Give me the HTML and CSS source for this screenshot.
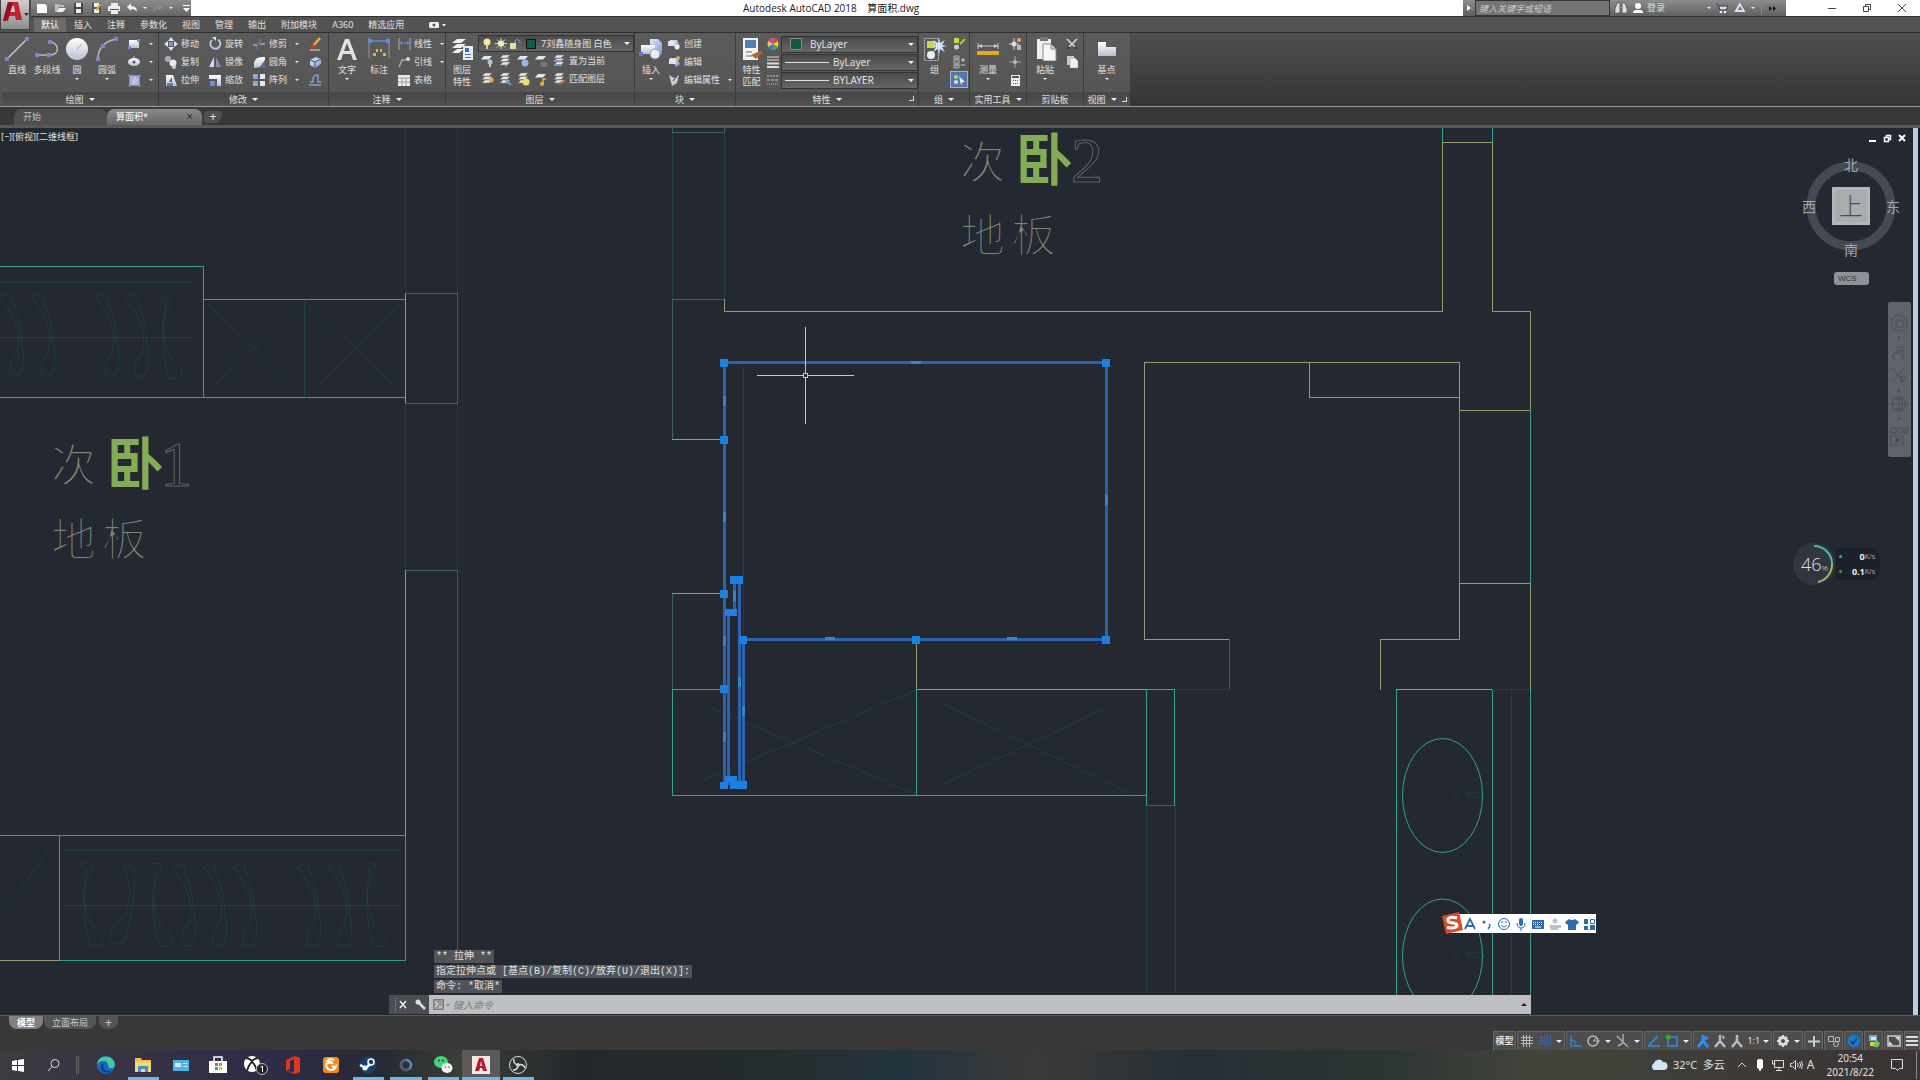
FILE: index.html
```html
<!DOCTYPE html>
<html lang="zh-CN">
<head>
<meta charset="utf-8">
<title>Autodesk AutoCAD 2018 - 算面积.dwg</title>
<link rel="stylesheet" href="styles.css">
</head>
<body>
<svg class="defs" aria-hidden="true">
<defs>
<linearGradient id="gw" x1="0" y1="0" x2="0" y2="1"><stop offset="0" stop-color="#fff"/><stop offset="1" stop-color="#b9bfd0"/></linearGradient>
<linearGradient id="gb" x1="0" y1="0" x2="1" y2="1"><stop offset="0" stop-color="#dfe8ff"/><stop offset="1" stop-color="#7f9bd6"/></linearGradient>
<symbol id="layers" viewBox="0 0 14 14"><path d="M5 1h7l-3 3H2zM5 4.500h7l-3 3H2zM5 8h7l-3 3H2z" fill="#e6e6e6" stroke="#777" stroke-width=".5"/></symbol>
<symbol id="leaf" viewBox="0 0 14 14"><path d="M4 2h8l-3 3.500H1z" fill="#e6e6e6"/></symbol>
<symbol id="cut-corner" viewBox="0 0 14 14"><path d="M3 3h7l3 6-4 3-2-4H2z" fill="url(#gb)"/></symbol>
</defs>
</svg>
<header class="titlebar">
  <button class="app" aria-label="应用程序菜单"><svg width="28" height="28" viewBox="0 0 28 28"><path d="M7 1h10l4 18h-6l-1-4H8l-1 5H2z" fill="#c8202f"/><path d="M11 5h2l1 6H9z" fill="#d7d7d7"/><path d="M7 1l-5 19 5-1L12 2z" fill="#8e1420"/><path d="M23 12h5l-2.500 3z" fill="#333"/></svg></button>
  <div class="top">
    <div class="quick">
      <button aria-label="新建"><svg width="14" height="14"><path d="M2 3h8l2 2v7H2z" fill="#fff"/></svg></button>
      <button aria-label="打开"><svg width="14" height="14"><path d="M2 3h4l1 1h4v2H6l-3 5H2z" fill="#bbb"/><path d="M6 7h7l-3 4H3z" fill="#eee"/></svg></button>
      <button aria-label="保存"><svg width="14" height="14"><path d="M3 2h9v11H3z" fill="#444"/><path d="M5 2h5v4H5zM5 8h5v4H5z" fill="#eee"/></svg></button>
      <button aria-label="另存为"><svg width="14" height="14"><path d="M3 2h9v11H3z" fill="#555"/><path d="M5 2h5v4H5zM5 8h5v4H5z" fill="#eee"/><path d="M12 3l-5 6" stroke="#e59b2e" stroke-width="2"/></svg></button>
      <button aria-label="打印"><svg width="14" height="14"><path d="M4 2h7v3H4zM1 5h12v5H1zM4 9h7v4H4z" fill="#eee"/><path d="M3 8h9v1H3z" fill="#555"/></svg></button>
      <button aria-label="放弃"><svg width="14" height="14"><path d="M2 6l4-4v3c5 0 6 3 6 6-1-2-3-3-6-3v2z" fill="#f2f2f2"/></svg></button>
      <i class="arr"></i>
      <button aria-label="重做"><svg width="14" height="14"><path d="M12 6L8 2v3c-5 0-6 3-6 6 1-2 3-3 6-3v2z" fill="#8a8a8a"/></svg></button>
      <i class="arr"></i>
      <button aria-label="自定义"><svg width="10" height="14"><path d="M2 4h7v1H2zM2 7h7L5.500 11z" fill="#fff"/></svg></button>
    </div>
    <h1>Autodesk AutoCAD 2018 &nbsp;&nbsp; 算面积.dwg</h1>
    <div class="info">
      <i class="tri-r"></i>
      <input type="text" placeholder="键入关键字或短语" aria-label="搜索">
      <button aria-label="查找"><svg width="14" height="14"><path d="M3 2h3v10H1V8zM8 2h3l2 6v4H8zM6 5h2v3H6z" fill="#ddd" stroke="#444" stroke-width=".6"/></svg></button>
      <button class="login"><svg width="12" height="14"><circle cx="6" cy="5" r="3" fill="#fff"/><path d="M1 12c0-3 2-3 5-3s5 0 5 3z" fill="#fff"/></svg>登录</button>
      <i class="arr"></i>
      <button aria-label="商店"><svg width="14" height="14"><path d="M1 3h2l2 6h6l2-4H4" fill="#ddd" stroke="#335" stroke-width="1"/><circle cx="6" cy="11" r="1.300" fill="#eee"/><circle cx="10" cy="11" r="1.300" fill="#eee"/></svg></button>
      <button aria-label="Autodesk 应用"><svg width="14" height="14"><path d="M7 3l4 7H3z" fill="none" stroke="#dfe3f5" stroke-width="2"/><path d="M7 1l6 10" stroke="#556" stroke-width=".6"/></svg></button>
      <i class="arr"></i><i class="sep"></i>
      <svg class="more" width="10" height="14"><path d="M1 5l3 2.500L1 10zM5 5l3 2.500L5 10z" fill="#111"/></svg>
    </div>
    <div class="win">
      <button aria-label="最小化"><svg width="10" height="10"><path d="M1 5.500h8" stroke="#444"/></svg></button>
      <button aria-label="还原"><svg width="10" height="10"><path d="M1.500 3.500h5v5h-5zM3.500 3V1.500h5v5H7" fill="none" stroke="#444"/></svg></button>
      <button aria-label="关闭"><svg width="10" height="10"><path d="M1 1l8 8M9 1l-8 8" stroke="#444"/></svg></button>
    </div>
  </div>
  <nav class="tabs">
    <button class="on">默认</button><button>插入</button><button>注释</button><button>参数化</button><button>视图</button><button>管理</button><button>输出</button><button>附加模块</button><button>A360</button><button>精选应用</button>
    <svg class="play" width="20" height="12"><rect x="1" y="3" width="10" height="6" rx="1.500" fill="#eee"/><circle cx="6" cy="6" r="1.500" fill="#555"/><path d="M14 5h4l-2 2.500z" fill="#eee"/></svg>
  </nav>
</header>

<section class="ribbon">
  <div class="panel p-draw">
    <div class="body">
      <button class="big"><svg width="24" height="24"><path d="M2 22L22 2" stroke="#ccc" stroke-width="1.500"/><path d="M0 20h4v4H0zM20 0h4v4h-4z" fill="#7c86d8"/></svg>直线</button>
      <button class="big"><svg width="24" height="24"><path d="M2 18h14c9-1 8-12-1-13" fill="none" stroke="#bbb" stroke-width="1.500"/><path d="M0 16h4v4H0zM12 16h4v4h-4zM13 3h4v4h-4z" fill="#7c86d8"/></svg>多段线</button>
      <button class="big"><svg width="24" height="24"><circle cx="12" cy="12" r="11" fill="url(#gw)"/><path d="M12 12l5-5" stroke="#9aa0cc"/></svg>圆<i class="arr"></i></button>
      <button class="big"><svg width="24" height="24"><path d="M3 22C3 10 10 4 22 2" fill="none" stroke="#bbb" stroke-width="1.500"/><path d="M1 20h4v4H1zM6 7h4v4H6zM19 0h4v4h-4z" fill="#7c86d8"/></svg>圆弧<i class="arr"></i></button>
      <div class="col">
        <button class="sm" aria-label="矩形"><svg width="14" height="14"><rect x="2" y="3" width="10" height="8" fill="url(#gw)"/><path d="M1 9h3v3H1zM10 2h3v3h-3z" fill="#7c86d8"/></svg><i class="arr"></i></button>
        <button class="sm" aria-label="椭圆"><svg width="14" height="14"><ellipse cx="7" cy="7" rx="6" ry="4" fill="url(#gw)"/><circle cx="7" cy="7" r="1.500" fill="#557"/><path d="M6 1h2v2H6z" fill="#7c86d8"/></svg><i class="arr"></i></button>
        <button class="sm" aria-label="图案填充"><svg width="14" height="14"><rect x="3" y="3" width="9" height="9" fill="#a9b2dc"/><path d="M5 9l4-4M6 11l5-5" stroke="#dde"/><path d="M2.500 1v13M12.500 1v13M1 2.500h13M1 12.500h13" stroke="#7c86d8"/></svg><i class="arr"></i></button>
      </div>
    </div>
    <h2>绘图 <i class="tri"></i></h2>
  </div>
  <div class="panel p-modify">
    <div class="body grid4">
      <button class="sm"><svg width="14" height="14"><path d="M7 0l3 4H4zM7 14l3-4H4zM0 7l4-3v6zM14 7l-4-3v6z" fill="#dfe3f2"/><path d="M5 5h4v4H5z" fill="#7f8fd0"/></svg>移动</button>
      <button class="sm"><svg width="14" height="14"><path d="M4 3a5 5 0 1 0 6-.5" fill="none" stroke="#b9c4ea" stroke-width="2"/><path d="M4 0h4v4z" fill="#dfe3f2"/></svg>旋转</button>
      <button class="sm"><svg width="14" height="14"><path d="M1 8h4M8 7h5" stroke="#aab" stroke-width="1.500"/><path d="M4 12l5-10" stroke="#7c86b8"/></svg>修剪<i class="arr"></i></button>
      <button class="sm" aria-label="删除"><svg width="14" height="14"><path d="M12 1L5 9" stroke="#e8b04a" stroke-width="2.500"/><path d="M6 8l-3 4" stroke="#d33" stroke-width="3"/><path d="M2 13h10" stroke="#ddd"/></svg></button>
      <button class="sm"><svg width="14" height="14"><circle cx="4" cy="4" r="3" fill="#aab"/><circle cx="9" cy="8" r="3.500" fill="#e9e9f2"/><circle cx="10" cy="12" r="2" fill="#ccd"/></svg>复制</button>
      <button class="sm"><svg width="14" height="14"><path d="M6 2v10H1z" fill="#d8dae8"/><path d="M8 2v10h5z" fill="#8a93ad"/></svg>镜像</button>
      <button class="sm"><svg width="14" height="14"><path d="M2 13V8q1-6 8-6h3v3L8 12z" fill="url(#gw)"/><path d="M7 13h6V7z" fill="#5870a8"/></svg>圆角<i class="arr"></i></button>
      <button class="sm" aria-label="分解"><svg width="14" height="14"><path d="M2 5l6-3 5 2v5l-6 4-5-3z" fill="url(#gb)"/><path d="M2 5l5 2 6-3M7 7v6" stroke="#456" fill="none"/></svg></button>
      <button class="sm"><svg width="14" height="14"><path d="M2 2h7l4 11H2z" fill="url(#gw)"/><path d="M3 10h6v3H3z" fill="#4f79c9"/><path d="M8 4v5H5z" fill="#557"/></svg>拉伸</button>
      <button class="sm"><svg width="14" height="14"><path d="M1 2h12v11H9V6H1z" fill="url(#gw)"/><path d="M2 8h5v5H2z" fill="#6c8fd6"/></svg>缩放</button>
      <button class="sm"><svg width="14" height="14"><path d="M1 1h5v5H1zM1 8h5v5H1z" fill="#8fa6dd"/><path d="M8 1h5v5H8zM8 8h5v5H8z" fill="#e4e8f5"/></svg>阵列<i class="arr"></i></button>
      <button class="sm" aria-label="偏移"><svg width="14" height="14"><path d="M1 12h12M2 9h3V6q0-4 5-4v7h3" fill="none" stroke="#8a9cd0" stroke-width="1.500"/></svg></button>
    </div>
    <h2>修改 <i class="tri"></i></h2>
  </div>
  <div class="panel p-note">
    <div class="body">
      <button class="big"><svg width="24" height="24"><path d="M2 23L10 2h4l8 21h-4l-2-6H8l-2 6zM9 14h6l-3-8z" fill="#e2e2e2"/></svg>文字<i class="arr"></i></button>
      <button class="big"><svg width="24" height="24"><path d="M2 1v20M22 1v20" stroke="#999"/><path d="M2 4h20" stroke="#5d8be0" stroke-width="1.500"/><path d="M1 2h4v4H1zM19 2h4v4h-4z" fill="#5d8be0"/><path d="M6 16h3v3H6zM9 12h2v3H9zM13 12h2v3h-2zM16 16h3v3h-3z" fill="#e9b52c"/></svg>标注</button>
      <div class="col">
        <button class="sm"><svg width="14" height="14"><path d="M2 1v12M13 1v12" stroke="#aaa"/><path d="M2 6h11" stroke="#5d8be0"/><path d="M2 6l3-2v4zM13 6l-3-2v4z" fill="#5d8be0"/></svg>线性<i class="arr"></i></button>
        <button class="sm"><svg width="14" height="14"><path d="M2 12L5 5h4" fill="none" stroke="#aaa" stroke-width="1.500"/><circle cx="11" cy="4" r="2" fill="#ddd"/></svg>引线<i class="arr"></i></button>
        <button class="sm"><svg width="14" height="14"><path d="M1 2h12v11H1z" fill="#eee"/><path d="M1 5h12M1 9h12M5 5v8M9 5v8" stroke="#999"/></svg>表格</button>
      </div>
    </div>
    <h2>注释 <i class="tri"></i></h2>
  </div>
  <div class="panel p-layer">
    <div class="body">
      <button class="big"><svg width="24" height="24"><path d="M7 2h9l-5 4H2zM7 7h9l-5 4H2zM7 12h7l-5 4H2z" fill="#f0f0f0"/><path d="M13 9h10v14H13z" fill="#e8ecf4"/><path d="M15 11h4v4h-4zM15 17h6v1h-6zM15 20h6v1h-6z" fill="#3f6fb5"/></svg>图层<br>特性</button>
      <div class="lay">
        <button class="combo"><svg width="58" height="16"><circle cx="8" cy="6" r="3.500" fill="#f3eb9a"/><path d="M7 9h2v4H7z" fill="#ccc"/><path d="M22 2v11M16 7.500h12M18 3.500l8 8M26 3.500l-8 8" stroke="#ddd"/><circle cx="22" cy="7.500" r="3" fill="#f5f0b8"/><path d="M31 7h6v6h-6z" fill="#e8e0a0"/><path d="M36 7V5q2-3 5 0v2" stroke="#999" fill="none"/><path d="M47.500 3.500h9v9h-9z" fill="#0c5c49" stroke="#111"/></svg><span>7刘鑫随身图 白色</span><i class="tri"></i></button>
        <div class="lrow">
          <svg width="14" height="14"><use href="#leaf"/><circle cx="10" cy="8" r="2.500" fill="#a9c8ee"/><path d="M9 10h2v3H9z" fill="#ccc"/></svg>
          <svg width="14" height="14"><use href="#layers"/><path d="M7 13l5-5" stroke="#9ab"/></svg>
          <svg width="14" height="14"><use href="#leaf"/><circle cx="9" cy="9" r="3.500" fill="#8fb6e4"/></svg>
          <svg width="14" height="14"><use href="#leaf"/><path d="M7 8h6v5H7z" fill="#777"/></svg>
          <button class="sm"><svg width="14" height="14"><use href="#layers"/><path d="M2 6h8v2H2zM2 10h8v2H2z" fill="#7d96c8"/></svg>置为当前</button>
        </div>
        <div class="lrow">
          <svg width="14" height="14"><use href="#layers"/><circle cx="11" cy="8" r="2.500" fill="#f0b040"/></svg>
          <svg width="14" height="14"><use href="#layers"/><path d="M8 8l5 5" stroke="#6f98d8" stroke-width="2"/></svg>
          <svg width="14" height="14"><use href="#layers"/><circle cx="10" cy="10" r="3.500" fill="#eedb6a"/></svg>
          <svg width="14" height="14"><use href="#leaf"/><path d="M9 13V7h3" stroke="#e9b52c" stroke-width="1.500" fill="none"/><circle cx="8" cy="12" r="2" fill="#e9b52c"/></svg>
          <button class="sm"><svg width="14" height="14"><use href="#layers"/><path d="M7 12l6-3" stroke="#c86a28" stroke-width="2.500"/></svg>匹配图层</button>
        </div>
      </div>
    </div>
    <h2>图层 <i class="tri"></i></h2>
  </div>
  <div class="panel p-block">
    <div class="body">
      <button class="big"><svg width="24" height="24"><path d="M11 2h8l4 4v11H11z" fill="url(#gb)"/><path d="M2 8h14v9H2z" fill="url(#gw)"/><circle cx="16" cy="17" r="5" fill="#e9ecf5" stroke="#8a93ad"/><path d="M0 15h4v4H0z" fill="#5d79d0"/></svg>插入<i class="arr"></i></button>
      <div class="col">
        <button class="sm"><svg width="14" height="14"><use href="#cut-corner"/><path d="M1 4h7v5H1z" fill="#dfe3ee"/><circle cx="10" cy="10" r="2.500" fill="#eee"/></svg>创建</button>
        <button class="sm"><svg width="14" height="14"><use href="#cut-corner"/><path d="M2 4h7v5H2z" fill="#dfe3ee"/><circle cx="11" cy="3" r="2" fill="#f0a83c"/></svg>编辑</button>
        <button class="sm"><svg width="14" height="14"><path d="M2 2l5 3 5-3-2 8-5 3z" fill="#c8cbd4"/><path d="M6 8l4-5" stroke="#444"/></svg>编辑属性<i class="arr"></i></button>
      </div>
    </div>
    <h2>块 <i class="tri"></i></h2>
  </div>
  <div class="panel p-prop">
    <div class="body">
      <button class="big"><svg width="24" height="24"><path d="M3 1h15v22H3z" fill="#f3f3f3"/><path d="M5 3h11v8H5z" fill="#4d7fb5"/><path d="M6 15h6M6 19h6" stroke="#666"/><path d="M11 18l5 4 7-7-3-1z" fill="#b5622a"/></svg>特性<br>匹配</button>
      <div class="rows">
        <svg width="12" height="14"><circle cx="6" cy="7" r="5.500" fill="#e8d23c"/><path d="M6 7L1 4a6 6 0 0 1 5-3z" fill="#d84a9a"/><path d="M6 7V1.500a6 6 0 0 1 5 3z" fill="#e04a30"/><path d="M6 7l5 3a6 6 0 0 1-5 2.500z" fill="#3cb04a"/><path d="M6 7v5.500A6 6 0 0 1 1 10z" fill="#3a78d8"/></svg>
        <button class="combo"><b class="sw"></b><span>ByLayer</span><i class="tri"></i></button>
        <svg width="12" height="14"><path d="M0 2h12" stroke="#ddd"/><path d="M0 5h12" stroke="#ddd"/><path d="M0 8.500h12M0 12h12" stroke="#ddd" stroke-width="2"/></svg>
        <button class="combo"><b class="ln"></b><span>ByLayer</span><i class="tri"></i></button>
        <svg width="12" height="14"><path d="M0 3h12" stroke="#ccc" stroke-dasharray="2 1"/><path d="M0 7h12" stroke="#ccc" stroke-dasharray="3 1"/><path d="M0 11h12" stroke="#ccc" stroke-dasharray="1 1"/></svg>
        <button class="combo"><b class="ln"></b><span>BYLAYER</span><i class="tri"></i></button>
      </div>
    </div>
    <h2>特性 <i class="tri"></i><i class="launch"></i></h2>
  </div>
  <div class="panel p-group">
    <div class="body">
      <button class="big"><svg width="24" height="24"><path d="M1.500 1.500h14v22h-14z" fill="none" stroke="#bbb" stroke-dasharray="2 1"/><path d="M4 4h8v7H4z" fill="#c5d94a"/><circle cx="8" cy="18" r="4" fill="#eee"/><path d="M16 0l1 6 5-3-3 5 5 1-5 1 3 5-5-3-1 6-1-6-5 3 3-5-4-1 4-1-3-5 5 3z" fill="#cfe6ff"/></svg>组</button>
      <div class="col">
        <svg width="14" height="14"><path d="M2 1h5v5H2z" fill="#c5d94a"/><circle cx="4.500" cy="10" r="2.500" fill="#ccc"/><path d="M8 7l5-5" stroke="#9bcf4a" stroke-width="2"/></svg>
        <svg width="14" height="14"><path d="M2 1h5v12H2z" fill="#777" stroke="#aaa"/><path d="M3 3h3v2H3zM3 8h3v3H3z" fill="#8fa0e0"/><path d="M9 5h4M11 3v4M9 10h4" stroke="#ccc"/></svg>
        <button class="hot" aria-label="组选择"><svg width="14" height="14"><circle cx="4" cy="4" r="2" fill="#c5d94a"/><circle cx="4" cy="9" r="2" fill="#ddd"/><path d="M7 3l6 6-3 .5-1 3z" fill="#eaf0c0"/></svg></button>
      </div>
    </div>
    <h2>组 <i class="tri"></i></h2>
  </div>
  <div class="panel p-util">
    <div class="body">
      <button class="big"><svg width="24" height="24"><path d="M2 6v6M22 6v6M2 9h20" stroke="#ccc"/><path d="M2 9l4-2v4zM22 9l-4-2v4z" fill="#ccc"/><path d="M1 14h22v4H1z" fill="#e3aa1c"/></svg>测量<i class="arr"></i></button>
      <div class="col">
        <svg width="14" height="14"><path d="M6 1v12M1 7h10" stroke="#ccc"/><circle cx="6" cy="7" r="2.500" fill="#ddd"/><circle cx="11" cy="3" r="2" fill="#f0a83c"/><path d="M9 8h4v5H9z" fill="#bbb"/></svg>
        <svg width="14" height="14"><path d="M7 1v12M1 7h12" stroke="#aaa"/><circle cx="7" cy="7" r="2" fill="#bbb"/></svg>
        <svg width="14" height="14"><path d="M3 2h9v11H3z" fill="#eee"/><path d="M4 3h7v2H4zM5 7h1v1H5zM7 7h1v1H7zM9 7h1v1H9zM5 10h1v1H5zM7 10h1v1H7zM9 10h1v1H9z" fill="#555"/></svg>
      </div>
    </div>
    <h2>实用工具 <i class="tri"></i></h2>
  </div>
  <div class="panel p-clip">
    <div class="body">
      <button class="big"><svg width="24" height="24"><path d="M4 2h14v20H4z" fill="#eee"/><path d="M7 0h8v4H7z" fill="#777"/><path d="M10 7h8l5 5v12H10z" fill="#f7f7f7" stroke="#888"/><path d="M18 7v5h5" fill="#ccc" stroke="#888"/></svg>粘贴<i class="arr"></i></button>
      <div class="col">
        <svg width="14" height="14"><path d="M2 2l8 8M12 2L4 10" stroke="#ddd" stroke-width="1.500"/><path d="M2 11h3M9 11h3" stroke="#333" stroke-width="2"/></svg>
        <svg width="14" height="14"><path d="M2 1h7v9H2z" fill="#ccc"/><path d="M5 3h5l3 3v7H5z" fill="#f3f3f3" stroke="#888" stroke-width=".5"/></svg>
      </div>
    </div>
    <h2>剪贴板</h2>
  </div>
  <div class="panel p-view">
    <div class="body"><button class="big"><svg width="24" height="24"><path d="M3 5h8v5h10v9H3z" fill="url(#gw)"/></svg>基点<i class="arr"></i></button></div>
    <h2>视图 <i class="tri"></i><i class="launch"></i></h2>
  </div>
</section>

<nav class="files">
  <button class="file">开始</button>
  <button class="file on">算面积*<span>×</span></button>
  <button class="plus" aria-label="新图形">+</button>
</nav>

<main class="canvas">
  <svg class="drawing" viewBox="0 128 1913 887" preserveAspectRatio="xMinYMin slice">
    <g class="dim">
      <path d="M405.500 128V293M405.500 403V570M457.500 128V293M457.500 403V570M672.500 132V299M724.500 132V299M743.500 366V636M0 282.500H192M0 337.500H192M304.500 299V397M64 850.500H400M64 905.500H400M1146.500 805V992M1175.500 805V992M1175 689.500H1229.500M1492 689.500H1530M1511.500 690V995"/>
      <path d="M208 304l83 80M216 384l85-80M310 304l82 80M320 384l81-80M0 911Q30 880 48 850M705 705l210 89M697 783l219-93M940 702l195 94M940 786l170-80"/>
      <path id="h1" d="M32 298c2-6 14-6 11 2 8 18 9 30 10 45 4 15 0 25-3 31h-7c-5-6-1-15 5-24 4-15 2-30-16-54"/>
      <use href="#h1" x="-31"/><use href="#h1" x="64"/><use href="#h1" x="94"/><use href="#h1" x="141" y="570"/><use href="#h1" x="172" y="570"/><use href="#h1" x="202" y="570"/><use href="#h1" x="266" y="570"/><use href="#h1" x="297" y="570"/>
      <path id="h2" d="M160 300c2-6 13-5 11 1-10 20-12 40 3 60 12 9 8 19 3 18h-7c-8-20-9-50-4-78"/>
      <use href="#h2" x="204" y="567"/><use href="#h2" x="-10" y="567"/><use href="#h2" x="-79" y="567"/>
      <path d="M124 868c2-5 10-4 10 2 2 25-4 54-10 73h-12c-5-6-1-17 13-28 8-15 5-30-1-47"/>
      <circle cx="1456" cy="795" r="3"/><circle cx="1456" cy="955" r="3"/><path d="M1468 793h15v4h-15zM1468 953h15v4h-15z"/>
    </g>
    <g class="mid"><path d="M457.500 293V403.500H405M405 293.500H457M457.500 570V958M672.500 299V439M672.500 299.500H724M672.500 128V132.500H724.500V128M672.500 593V689M1229.500 639V689M405 570.500H457M1175.500 805.500H1146"/></g>
    <g class="yel"><path d="M405.500 293V403M405.500 570V835M0 960.500H59M724.500 299V311.500H1442.500V142.500H1492.500V311.500H1530.500V410M672 439.500H724M672 593.500H724M916.500 639V689.500H1146M1229 639.500H1144.500V362.500H1459.500V410.500H1530M1309.500 362V397.500H1459M1459.500 583V639.500H1380.500V689.500M1459 583.500H1530.500V690M1396 689.500H1492"/></g>
    <g class="teal"><path d="M0 266.500H203.500V397M0 397.500H405M203 299.500H405M0 835.500H405.500V960.500H59.500V835M672 689.500H724M672.500 689V795.500H1146M916.500 689V795M1146.500 805V689.500H1174.500V805M1442.500 128V142M1492.500 128V142M1459.500 410V583M1530.500 410V583M1396.500 690V1013M1492.500 690V1008M1530.500 690V1015"/><ellipse cx="1442.500" cy="795.500" rx="40" ry="57"/><ellipse cx="1442.500" cy="956" rx="40" ry="57"/></g>
    <g class="sel"><path d="M724 362.500H1106V639H743V785M724 362V785M728 612V785M734 580V610M739 580V785"/></g>
    <g class="grip"><path d="M720 359h8v8h-8zM1102 359h8v8h-8zM720 436h8v8h-8zM720 590h8v8h-8zM720 685h8v8h-8zM739 636h8v8h-8zM912 636h8v8h-8zM1102 636h8v8h-8zM730 576h13v8h-13zM725 609h12v7h-12zM725 776h12v6h-12zM720 782h8v7h-8zM730 781h17v8h-17z"/></g>
    <g class="tick"><path d="M911 361h10v3h-10zM723 396h3v10h-3zM723 512h3v10h-3zM733 591h3v10h-3zM723 636h3v10h-3zM738 677h3v10h-3zM742 706h3v10h-3zM723 732h3v10h-3zM825 637h10v3h-10zM1007 637h10v3h-10zM1105 495h3v10h-3z"/></g>
    <g class="cross"><path d="M757 375.500H803M808 375.500H854M805.500 327V373M805.500 378V424M803.500 373.500h4v4h-4z"/></g>
    <g class="label"><text x="51" y="482">次</text><text x="51" y="556">地</text><text x="102" y="556">板</text><text x="960" y="179">次</text><text x="960" y="252">地</text><text x="1011" y="252">板</text></g>
    <g class="label-n"><text x="160" y="486">1</text><text x="1071" y="182">2</text></g>
    <g class="label-b"><text x="107" y="484">卧</text><text x="1016" y="180">卧</text></g>
  </svg>
  <p class="viewlabel">[−][俯视][二维线框]</p>
  <div class="docwin"><svg width="40" height="12"><path d="M1 8h7v2H1z" fill="#fff"/><path d="M16.500 5.500h4v4h-4zM18.500 5V3.500h4v4H21" fill="none" stroke="#fff" stroke-width="1.500"/><path d="M31 3l6 6M37 3l-6 6" stroke="#fff" stroke-width="2"/></svg></div>
  <div class="cube">
    <svg width="100" height="100"><circle cx="50" cy="50" r="40" fill="none" stroke="#454951" stroke-width="9"/><path d="M31 31h38v38H31z" fill="#b4b7bb"/><path d="M34 34h32v32H34z" fill="#a9adad"/></svg>
    <span class="n">北</span><span class="s">南</span><span class="w">西</span><span class="e">东</span><span class="c">上</span>
  </div>
  <button class="wcs">WCS</button>
  <div class="navbar"><svg width="23" height="155" fill="none" stroke="#4c4f54"><circle cx="11" cy="21" r="8"/><path d="M8 18h7v7H8zM6 58c-3-8 3-9 8-6M9 45h6M9 49h6M15 44v14M4 66l12 14M16 66L4 80"/><circle cx="15" cy="77" r="3"/><circle cx="11" cy="102" r="7"/><path d="M3 102h17M11 94v16M8 97h6v10H8M3 126h5v5H3zM10 126h5v5h-5zM17 126h3v5h-3zM3 134h12v9H3z"/><path d="M8 136l4 2-4 3zM10 35h3l-2 2zM10 88h3l-2 2zM10 116h3l-2 2z" fill="#44474c"/></svg></div>
  <div class="speed">
    <svg width="44" height="44"><circle cx="22" cy="22" r="21" fill="#303540"/><path d="M22 4a18 18 0 0 1 18 18" fill="none" stroke="#4fb8a8" stroke-width="2"/><path d="M40 22a18 18 0 0 1-14 18" fill="none" stroke="#a0c060" stroke-width="2"/></svg>
    <strong>46<small>%</small></strong>
    <div class="rate"><p><i class="up"></i><b>0</b>K/s</p><p><i class="dn"></i><b>0.1</b>K/s</p></div>
  </div>
  <div class="ime">
    <svg class="sogou" width="22" height="22"><path d="M1 4L18 0l4 18-17 4z" fill="#dc4a28"/><path d="M16 6c-6-2-10 0-9 3s9 1 9 4-6 4-10 2" fill="none" stroke="#fff" stroke-width="3"/></svg>
    <svg width="14" height="14"><path d="M2 12L7 2l5 10M4 9h6" fill="none" stroke="#2b6cb3" stroke-width="1.800"/></svg>
    <svg width="14" height="14"><circle cx="4" cy="5" r="1.500" fill="#2b6cb3"/><path d="M9 7q2 2-1 5" stroke="#2b6cb3" stroke-width="1.500" fill="none"/></svg>
    <svg width="14" height="14" fill="none" stroke="#2b6cb3"><circle cx="7" cy="7" r="5.500"/><path d="M4 8q3 4 6 0M5 4v2M9 4v2"/></svg>
    <svg width="14" height="14"><rect x="5" y="1" width="4" height="8" rx="2" fill="#2b6cb3"/><path d="M3 6q0 5 4 5t4-5M7 11v3" stroke="#2b6cb3" fill="none"/></svg>
    <svg width="14" height="14"><path d="M1 3h12v9H1z" fill="#2b6cb3"/><path d="M2 5.500h10M2 7.500h10" stroke="#fff" stroke-dasharray="1 1"/><path d="M4 10h6" stroke="#fff"/></svg>
    <svg width="14" height="14"><circle cx="7" cy="4" r="2.500" fill="#bcc2cc"/><path d="M1 8h9v5H3zM10 8h3v3h-3z" fill="#bcc2cc"/></svg>
    <svg width="14" height="14"><path d="M4 2q3 2 6 0l4 3-2 3-1-1v6H3V7L2 8 0 5z" fill="#2b6cb3"/></svg>
    <svg width="14" height="14"><path d="M2 2h4v5H2zM8 8h5v5H8zM2 9h4v4H2z" fill="#2b6cb3"/><path d="M8.500 2.500h4v4h-4z" fill="none" stroke="#2b6cb3"/></svg>
  </div>
  <div class="cmd">
    <p>** 拉伸 **</p><p>指定拉伸点或 [基点(B)/复制(C)/放弃(U)/退出(X)]:</p><p>命令: *取消*</p>
    <div class="cmdbar">
      <div class="grab"><svg width="40" height="19"><path d="M6.500 3v14" stroke="#888" stroke-dasharray="1 1"/><path d="M11 6l6 7M17 6l-6 7" stroke="#eee" stroke-width="1.500"/><path d="M28 6l8 8" stroke="#ddd" stroke-width="2.500"/><circle cx="29" cy="7" r="2.500" fill="#ddd"/></svg></div>
      <svg width="24" height="19"><path d="M4.500 4.500h10v10h-10z" fill="#999" stroke="#777"/><path d="M6 7l3 2-3 3M10 12h3" stroke="#eee" fill="none"/><path d="M17 9h4l-2 2z" fill="#777"/></svg>
      <input type="text" placeholder="键入命令" aria-label="命令">
      <i class="upmark"></i>
    </div>
  </div>
  <div class="edge"></div>
</main>

<footer class="status">
  <nav class="layouts"><button class="on">模型</button><button>立面布局</button><button class="add" aria-label="新建布局">+</button></nav>
  <div class="tools">
    <div class="g w23"><b>模型</b></div>
    <div class="g w48"><svg width="14" height="14"><path d="M3.500 1v12M6.500 1v12M9.500 1v12M1 3.500h12M1 6.500h12M1 9.500h12" stroke="#bbb"/></svg><svg width="14" height="14"><path d="M3.500 1v12M6.500 1v12M9.500 1v12M12.500 1v12M1 3.500h12M1 6.500h12M1 9.500h12" stroke="#2f62c8" stroke-dasharray="2 1"/></svg><i class="tri"></i></div>
    <div class="g w77"><svg width="14" height="14"><path d="M2 1v11h11M2 6q5 0 5 6" stroke="#2f7de0" stroke-width="1.500" fill="none"/></svg><svg width="14" height="14"><circle cx="6" cy="7" r="5" fill="none" stroke="#bbb" stroke-width="1.500"/><path d="M6 7h7M6 7l4-4" stroke="#bbb"/></svg><i class="tri"></i><svg width="14" height="14"><path d="M1 2l11 11M7 0v9M7 9l-5 3" stroke="#aaa" stroke-width="1.500"/></svg><i class="tri"></i></div>
    <div class="g w48"><svg width="14" height="14"><path d="M1 12h12M2 11l9-9" stroke="#2f8cf0" stroke-width="1.500"/></svg><svg width="14" height="14"><path d="M3 3h9v9H3z" fill="none" stroke="#2f8cf0" stroke-width="1.500"/><path d="M1 1h4v4H1z" fill="#18c018"/></svg><i class="tri"></i></div>
    <div class="g w79"><svg width="14" height="14"><path d="M7 1v7M7 7l-5 6M7 7l5 6" stroke="#2f8cf0" stroke-width="3"/><circle cx="10" cy="4" r="2" fill="#2f8cf0"/></svg><svg width="14" height="14"><path d="M7 1v7M7 7l-5 6M7 7l5 6" stroke="#bbb" stroke-width="2.500"/><path d="M9 1l3 3-2 1z" fill="#ddd"/></svg><svg width="14" height="14"><path d="M7 1v7M7 7l-5 6M7 7l5 6" stroke="#bbb" stroke-width="2.500"/></svg><span>1:1</span><i class="tri"></i></div>
    <div class="g w30"><svg width="14" height="14"><circle cx="7" cy="7" r="3.500" fill="none" stroke="#ddd" stroke-width="3"/><path d="M7 1v2M7 11v2M1 7h2M11 7h2M3 3l1 1M11 11l-1-1M11 3l-1 1M3 11l1-1" stroke="#ddd" stroke-width="2"/></svg><i class="tri"></i></div>
    <div class="g w19"><svg width="14" height="14"><path d="M7 2v11M1 7.500h12" stroke="#ccc" stroke-width="2"/></svg></div>
    <div class="g w19"><svg width="14" height="14" fill="none" stroke="#bbb"><path d="M1.500 2.500h5v5h-5zM8.500 3.500h4v4h-4z"/><circle cx="9" cy="10" r="2.500"/></svg></div>
    <div class="g w19"><svg width="14" height="14"><circle cx="7" cy="7" r="6.500" fill="#1878c8"/><path d="M4 7l2 3 4-6" stroke="#0b3f78" fill="none" stroke-width="1.500"/></svg></div>
    <div class="g w19"><svg width="14" height="14"><path d="M2 1h8v6H2z" fill="#5ab0e8"/><path d="M4 3h5v3H4z" fill="#e8e8e8"/><path d="M3 8h9v4H3z" fill="#e8c838"/><path d="M9 6l4 3-2 4H6z" fill="#7ac05a"/></svg></div>
    <div class="g w19"><svg width="14" height="14"><path d="M1 2h12v10H1z" fill="none" stroke="#ccc" stroke-width="1.500"/><path d="M8 3h4v4zM6 11H2V7z" fill="#ddd"/></svg></div>
    <div class="g w16"><svg width="12" height="14"><path d="M0 3h12M0 7h12M0 11h12" stroke="#ddd" stroke-width="2"/></svg></div>
  </div>
</footer>

<footer class="taskbar">
  <div class="start">
    <button aria-label="开始"><svg width="14" height="14"><path d="M1 3l5-1v5H1zM7 2l6-1v6H7zM1 8h5v5l-5-1zM7 8h6v6l-6-1z" fill="#fff"/></svg></button>
    <button aria-label="搜索"><svg width="14" height="14" fill="none" stroke="#ddd"><circle cx="8" cy="5.500" r="4"/><path d="M5 8.500L1 13"/></svg></button>
    <i class="bar"></i>
  </div>
  <div class="apps">
    <button aria-label="Edge"><svg width="20" height="20"><circle cx="10" cy="10" r="9" fill="#1769c4"/><path d="M1 10C1 3 8 0 13 2c6 2 8 10 3 11-5 1-3-4-5-6-3-2-9-1-10 3z" fill="#3fc9a4"/><path d="M7 12c1 4 5 5 9 3-3 4-10 3-11-1-1-3 1-6 4-6z" fill="#0b3f86"/></svg></button>
    <button class="run" aria-label="文件资源管理器"><svg width="20" height="20"><path d="M2 3h6l1 2h9v12H2z" fill="#f3c14e"/><path d="M2 7h16v10H2z" fill="#f8d676"/><path d="M5 11h10v6h-3v-3H8v3H5z" fill="#3f8fd0"/></svg></button>
    <button aria-label="邮件"><svg width="20" height="20"><path d="M2 5h16v11H2z" fill="#4fb2ea"/><path d="M4 8h6v4H4zM12 8h4v1h-4zM12 11h4v1h-4z" fill="#cfeaff"/></svg></button>
    <button aria-label="应用商店"><svg width="20" height="20"><path d="M1 6h18v12H1z" fill="#fff"/><path d="M6 6V2h8v4" fill="none" stroke="#fff" stroke-width="1.500"/><path d="M7 8h3v3H7z" fill="#f25022"/><path d="M11 8h3v3h-3z" fill="#7fba00"/><path d="M7 12h3v3H7z" fill="#00a4ef"/><path d="M11 12h3v3h-3z" fill="#ffb900"/></svg></button>
    <button aria-label="Xbox"><svg width="26" height="20"><circle cx="9" cy="9" r="8" fill="#fff"/><path d="M4 16Q6 9 9 7q3 2 5 9M3 3q3 0 6 3 3-3 6-3" stroke="#222" stroke-width="1.800" fill="none"/><circle cx="19" cy="14" r="5.500" fill="#222" stroke="#bbb"/><path d="M17.500 12.500l2-1.500v6" stroke="#fff" fill="none"/></svg></button>
    <button aria-label="Office"><svg width="20" height="20"><path d="M3 5l9-4 5 2v14l-5 2-9-3 8 1V4L7 6v8l-4 2z" fill="#d8381c"/></svg></button>
    <button aria-label="UC"><svg width="20" height="20"><rect x="2" y="2" width="16" height="16" rx="3" fill="#f58a1f"/><path d="M13 5q-5-2-7 1 4 0 5 2-5-1-6 2 1 5 5 5 5-1 5-4-2 2-4 0" stroke="#fff" stroke-width="1.800" fill="none"/></svg></button>
    <button class="run" aria-label="Steam"><svg width="20" height="20"><circle cx="10" cy="10" r="8.500" fill="#17406e"/><circle cx="13" cy="7" r="3" fill="none" stroke="#fff" stroke-width="1.500"/><path d="M2 10l6 3 4-4" stroke="#fff" stroke-width="2.500" fill="none"/><circle cx="7" cy="13" r="2.500" fill="#fff"/></svg></button>
    <button class="run" aria-label="加速器"><svg width="20" height="20"><circle cx="10" cy="10" r="5" fill="none" stroke="#555c66" stroke-width="3"/><path d="M10 5a5 5 0 0 1 3 9" stroke="#5aa0d8" fill="none" stroke-width="1.500"/></svg></button>
    <button class="run" aria-label="微信"><svg width="20" height="20"><ellipse cx="8" cy="7" rx="7" ry="6" fill="#45d673"/><ellipse cx="14" cy="13" rx="5.500" ry="5" fill="#f0f5ee"/><circle cx="6" cy="5.500" r="1" fill="#244"/><circle cx="10" cy="5.500" r="1" fill="#244"/><circle cx="12.500" cy="12" r=".8" fill="#555"/><circle cx="16" cy="12" r=".8" fill="#555"/></svg></button>
    <button class="run active" aria-label="AutoCAD"><svg width="18" height="18"><path d="M0 0h18v18H0z" fill="#fbe8e4"/><path d="M7 2h4l4 13h-4l-1-3H8l-1 3H3zM8 10h2l-1-5z" fill="#b01c2c"/></svg></button>
    <button class="run" aria-label="OBS"><svg width="20" height="20" fill="none" stroke="#ddd"><circle cx="10" cy="10" r="8.500"/><path d="M10 10q-5-1-4-6M10 10q5-2 7 3M10 10q0 5-5 5" stroke-width="1.500"/><circle cx="10" cy="10" r="1.500"/></svg></button>
  </div>
  <div class="tray">
    <svg width="18" height="16"><path d="M4 13a4 4 0 0 1 0-7 5 5 0 0 1 9-1 4 4 0 0 1 1 8z" fill="#cfe6fa"/></svg>
    <span class="wx">32°C&nbsp; 多云</span>
    <svg width="14" height="14"><path d="M3 9l4-4 4 4" stroke="#ddd" fill="none"/></svg>
    <svg width="14" height="14"><rect x="4" y="1" width="6" height="10" rx="2" fill="#fff"/><path d="M6 11h2v2H6z" fill="#ddd"/></svg>
    <svg width="14" height="14" fill="none" stroke="#ddd"><path d="M3.500 2.500h9v7h-9zM5 12.500h6M8 10v2M1.500 2v4h3"/></svg>
    <svg width="14" height="14" fill="none" stroke="#ddd"><path d="M1.500 5.500h2l3-3v9l-3-3h-2zM8.500 5q1.500 2 0 4M10.500 4q2.500 3 0 6M12.500 3q2 4 0 8"/></svg>
    <span class="lang">A</span>
    <time>20:54<br>2021/8/22</time>
    <svg width="14" height="14" fill="none" stroke="#ddd"><path d="M1.500 1.500h11v9h-3l-2 2-2-2h-4z"/></svg>
    <i class="desk"></i>
  </div>
</footer>
</body>
</html>
```
FILE: styles.css
```css
* { box-sizing: border-box; margin: 0; padding: 0; }
body {
  display: flex; flex-direction: column; height: 100vh; overflow: hidden;
  font: 9px/12px "Noto Sans", "Noto Sans CJK SC", sans-serif; color: #e0e0e0; background: #242830;
}
button, input { font: inherit; color: inherit; border: 0; background: none; }
button { display: flex; align-items: center; white-space: nowrap; }
svg { display: block; flex: none; }
.defs { position: absolute; width: 0; height: 0; }
.arr { width: 0; height: 0; border: 2px solid transparent; border-top-color: #eee; border-bottom: 0; flex: none; }
.tri { width: 0; height: 0; border: 3px solid transparent; border-top-color: #eee; border-bottom: 0; flex: none; }

.titlebar { display: grid; grid-template: 17px 15px / 31px 1fr; flex: none; background: #535353; border-bottom: 1px solid #2d2d2d; }
.app { grid-row: 1 / 3; width: 30px; height: 30px; background: linear-gradient(#cfcfcf, #8e8e8e); border: 1px solid #444; border-top: 0; }
.top { display: flex; background: #fff; border-bottom: 1px solid #333; }
.quick { display: flex; align-items: center; gap: 4px; width: 160px; padding-left: 4px; background: linear-gradient(#8c8c8c, #666); }
.quick button:last-child { margin-left: 4px; }
.top h1 { flex: 1; padding: 2px 0 0 552px; font: 10px/12px "Open Sans", "Noto Sans CJK SC", sans-serif; color: #222; white-space: nowrap; }
.info { display: flex; align-items: center; gap: 4px; width: 323px; background: linear-gradient(#8c8c8c, #606060); }
.tri-r { border: 3px solid transparent; border-left: 4px solid #fff; border-right: 0; margin: 0 0 0 4px; }
.info input { width: 135px; height: 16px; padding-left: 3px; background: #747474; border: 1px solid #333; font-style: italic; }
.info input::placeholder { color: #ccc; }
.login { gap: 3px; width: 71px; }
.sep { width: 1px; height: 13px; margin: 0 2px; background: #888; }
.win { display: flex; align-items: center; justify-content: space-between; width: 134px; padding: 0 13px 0 41px; }
.tabs { display: flex; align-items: center; gap: 1px; padding-left: 3px; }
.tabs button { height: 14px; padding: 0 7px; }
.tabs .on { background: #6c6c6c; color: #fff; }
.play { margin-left: 16px; }

.ribbon { display: flex; height: 74px; flex: none; background: linear-gradient(#4f4f4f, #353535); border-bottom: 1px solid #9a9a9a; }
.panel { display: flex; flex-direction: column; background: linear-gradient(#5b5b5b, #545454); border-right: 1px solid #3c3c3c; }
.body { display: flex; flex: 1; padding-top: 2px; }
.panel h2 { display: flex; align-items: center; justify-content: center; gap: 5px; height: 14px; font: 9px/13px "Noto Sans", "Noto Sans CJK SC", sans-serif; background: linear-gradient(#464646, #525252); white-space: nowrap; }
.launch { width: 5px; height: 5px; border: 1px solid #ddd; border-top: 0; border-left: 0; }
.p-prop h2 { position: relative; }
.p-prop .launch { position: absolute; right: 4px; top: 4px; }
.big { flex-direction: column; width: 31px; line-height: 12px; padding-top: 2px; text-align: center; }
.big svg { margin-bottom: 3px; }
.big .arr { margin-top: 2px; }
.col { display: flex; flex-direction: column; }
.sm { height: 18px; gap: 3px; }
.sm .arr { margin-left: 5px; }
.col > svg { margin: 2px; }
.p-draw { width: 159px; padding-left: 2px; }
.p-draw .big { width: 30px; }
.p-draw .col { padding-left: 5px; }
.p-modify { width: 170px; }
.grid4 { display: grid; grid-template-columns: 44px 44px 56px 14px; grid-template-rows: 18px 18px 18px; padding-left: 5px; }
.p-note { width: 117px; }
.p-note .big { width: 32px; margin-left: 2px; }
.p-note .big + .big { margin-left: 0; }
.p-note .col { padding-left: 2px; }
.p-layer { width: 189px; }
.p-layer .big { width: 32px; }
.lay { display: flex; flex-direction: column; width: 156px; }
.combo { height: 17px; gap: 4px; width: 100%; padding-right: 3px; background: linear-gradient(#4a4a4a, #666); border: 1px solid #333; }
.combo span { flex: 1; text-align: left; }
.lrow { display: flex; align-items: center; gap: 4px; height: 18px; padding-left: 2px; }
.p-block { width: 101px; }
.p-block .big { width: 32px; }
.p-prop { width: 183px; }
.rows { display: grid; grid-template: 18px 18px 18px / 14px 137px; align-items: center; }
.rows .combo { font-size: 10px; }
.sw { width: 12px; height: 12px; margin: 0 4px 0 8px; background: #0c5c49; border: 1px solid #888; }
.ln { width: 44px; height: 1px; margin-left: 3px; background: #ddd; }
.p-group { width: 51px; }
.hot { width: 18px; height: 17px; justify-content: center; background: #5577b0; border: 1px solid #9ab4e0; }
.p-util, .p-clip { width: 57px; }
.p-util .big, .p-clip .big { width: 36px; }
.p-view { width: 46px; border-right: 0; }
.p-view .big { width: 45px; }

.files { display: flex; align-items: flex-end; height: 21px; flex: none; padding-left: 14px; background: #383838; border-bottom: 3px solid #585858; }
.file { width: 93px; height: 16px; padding: 0 9px; border-radius: 7px 7px 0 0; background: #4f4f4f; color: #bbb; }
.file.on { width: 95px; background: linear-gradient(#8a8a8a, #666); color: #fff; justify-content: space-between; }
.file span { font-size: 12px; color: #333; }
.plus { width: 18px; height: 12px; margin: 0 0 2px 2px; justify-content: center; font-size: 12px; background: #505050; border-radius: 3px 3px 8px 3px; }

.canvas { position: relative; flex: 1; min-height: 0; overflow: hidden; background: #242830; }
.drawing { width: calc(100% - 7px); height: 100%; fill: none; shape-rendering: crispEdges; }
.drawing ellipse, .dim, .label, .label-b { shape-rendering: auto; }
.dim { stroke: #1b403d; }
.mid { stroke: #36645c; }
.yel { stroke: #959b6c; }
.teal { stroke: #30a48c; }
.sel { stroke: #2f62ae; stroke-width: 3px; }
.grip { fill: #1c80e0; }
.tick { fill: #2f86c8; }
.cross { stroke: #c4c8cc; }
.label { font-family: "Noto Sans CJK SC", sans-serif; font-size: 45px; fill: #7c8672; stroke: #242830; stroke-width: 2px; }
.label-n { font-family: "Liberation Serif", serif; font-size: 64px; fill: #242830; stroke: #5d655c; stroke-width: 1px; }
.label-b { font-family: "Noto Sans CJK SC", sans-serif; font-size: 56px; fill: #83ad55; stroke: #83ad55; stroke-width: 2px; }
.viewlabel { position: absolute; left: 1px; top: 3px; font-size: 9px; }
.docwin { position: absolute; right: 12px; top: 4px; }
.cube { position: absolute; right: 19px; top: 28px; width: 100px; height: 100px; color: #a4a8ac; font-size: 14px; line-height: 16px; }
.cube span { position: absolute; }
.cube .n { left: 43px; top: 1px; }
.cube .s { left: 43px; top: 86px; }
.cube .w { left: 1px; top: 43px; }
.cube .e { right: 1px; top: 43px; }
.cube .c { left: 38px; top: 38px; font-size: 24px; line-height: 24px; color: #4b5056; font-weight: 300; }
.wcs { position: absolute; right: 51px; top: 144px; width: 35px; height: 13px; padding-left: 4px; border-radius: 3px; background: #8d9198; color: #333; font: 8px/12px "Liberation Sans", sans-serif; }
.navbar { position: absolute; right: 9px; top: 174px; width: 23px; height: 155px; background: #5f6369; border-radius: 2px; }
.speed { position: absolute; right: 40px; top: 414px; display: flex; align-items: center; width: 88px; }
.speed strong { position: absolute; left: 9px; top: 10px; font: 18px/24px "Open Sans", sans-serif; font-weight: 300; white-space: nowrap; }
.speed small { font-size: 8px; }
.rate { flex: 1; height: 32px; padding: 1px 5px 0 3px; background: #1b202a; border-radius: 0 10px 10px 0; font-size: 7px; color: #aaa; }
.rate p { display: flex; align-items: center; height: 15px; }
.rate b { flex: 1; text-align: right; font-size: 9px; color: #eee; }
.rate i { width: 3px; height: 3px; border-radius: 2px; background: #2fb0b0; }
.rate .dn { background: #3fa040; }
.ime { position: absolute; right: 324px; top: 786px; display: flex; align-items: center; gap: 3px; width: 146px; height: 19px; padding-left: 13px; background: #fff; }
.sogou { position: absolute; left: -9px; top: -2px; }
.cmd { position: absolute; left: 389px; right: 389px; bottom: 1px; display: flex; flex-direction: column; align-items: flex-start; gap: 2px; }
.cmd p { height: 13px; margin-left: 45px; padding: 0 2px; font: 10px/14px "Liberation Mono", "Noto Sans CJK SC", monospace; background: #50545a; white-space: nowrap; }
.cmdbar { display: flex; align-self: stretch; align-items: center; height: 19px; background: #bdbfc2; border: 0; }
.grab { background: #4a4d52; }
.cmdbar input { flex: 1; font-style: italic; font-size: 10px; }
.cmdbar input::placeholder { color: #7b7d80; }
.upmark { margin-right: 4px; border: 3px solid transparent; border-bottom-color: #222; border-top: 0; }
.edge { position: absolute; right: 0; top: 0; bottom: 0; width: 7px; background: #b5cfe6; border-right: 2px solid #16191e; }

.status { display: flex; justify-content: space-between; height: 35px; flex: none; background: #383838; border-top: 1px solid #5a5a5a; }
.layouts { display: flex; gap: 1px; padding-left: 9px; }
.layouts button { height: 13px; padding: 0 8px; background: #555; border-radius: 0 0 8px 8px; color: #ccc; }
.layouts .on { background: #808080; color: #fff; font-weight: 700; }
.layouts .add { padding: 0 6px; font-size: 12px; margin-left: 2px; }
.tools { display: flex; align-self: flex-end; gap: 1px; height: 19px; }
.g { display: flex; align-items: center; justify-content: space-around; background: #4d4d4d; border: 1px solid #666; border-bottom: 0; white-space: nowrap; }
.w16 { width: 16px; }
.w19 { width: 19px; }
.w23 { width: 23px; }
.w30 { width: 30px; }
.w48 { width: 48px; }
.w77 { width: 77px; }
.w79 { width: 79px; }

.taskbar { display: flex; height: 30px; flex: none; background: linear-gradient(90deg, #3c3b3f, #2f2b48 14%, #252a32 20%, #3a3f38 24%, #23282c 30%, #252c2c 40%, #22343f 47%, #3c3a38 54%, #252f36 62%, #2c3532 72%, #42443b 80%, #3a3234); }
.start { display: flex; align-items: center; width: 87px; }
.start button { width: 36px; height: 30px; justify-content: center; }
.bar { width: 3px; height: 18px; margin-left: 4px; border: 1px solid #666; border-width: 0 1px; }
.apps { display: grid; grid-template-columns: repeat(12, 1fr); width: 450px; }
.apps button { justify-content: center; margin: 0 3px; }
.apps .run { border-bottom: 3px solid #76b4e0; padding-top: 3px; }
.apps .active { margin: 0; background: #5a5a5c; }
.tray { display: flex; align-items: center; gap: 4px; margin-left: auto; }
.wx { font-size: 11px; margin: 0 6px 0 1px; }
.lang { font-size: 12px; margin: 0 8px 0 0; }
.tray time { font-size: 10px; line-height: 14px; text-align: center; margin-right: 12px; }
.desk { width: 1px; height: 28px; background: #888; margin: 0 3px 0 8px; }
```
